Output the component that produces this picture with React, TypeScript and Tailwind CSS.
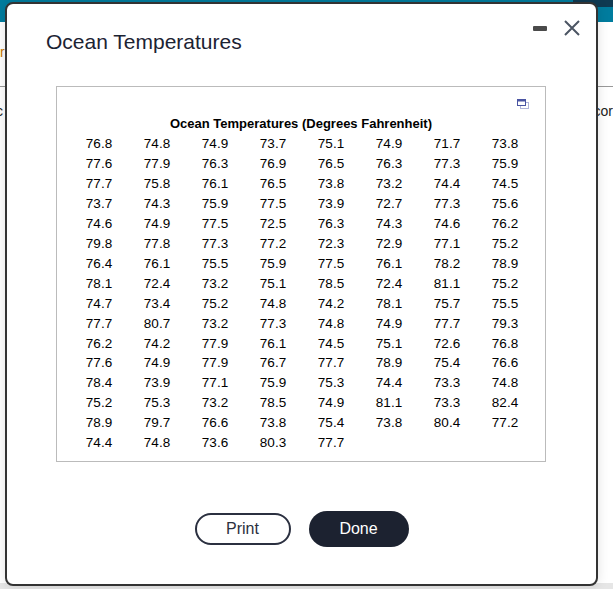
const rows = [
  ['76.8', '74.8', '74.9', '73.7', '75.1', '74.9', '71.7', '73.8'],
  ['77.6', '77.9', '76.3', '76.9', '76.5', '76.3', '77.3', '75.9'],
  ['77.7', '75.8', '76.1', '76.5', '73.8', '73.2', '74.4', '74.5'],
  ['73.7', '74.3', '75.9', '77.5', '73.9', '72.7', '77.3', '75.6'],
  ['74.6', '74.9', '77.5', '72.5', '76.3', '74.3', '74.6', '76.2'],
  ['79.8', '77.8', '77.3', '77.2', '72.3', '72.9', '77.1', '75.2'],
  ['76.4', '76.1', '75.5', '75.9', '77.5', '76.1', '78.2', '78.9'],
  ['78.1', '72.4', '73.2', '75.1', '78.5', '72.4', '81.1', '75.2'],
  ['74.7', '73.4', '75.2', '74.8', '74.2', '78.1', '75.7', '75.5'],
  ['77.7', '80.7', '73.2', '77.3', '74.8', '74.9', '77.7', '79.3'],
  ['76.2', '74.2', '77.9', '76.1', '74.5', '75.1', '72.6', '76.8'],
  ['77.6', '74.9', '77.9', '76.7', '77.7', '78.9', '75.4', '76.6'],
  ['78.4', '73.9', '77.1', '75.9', '75.3', '74.4', '73.3', '74.8'],
  ['75.2', '75.3', '73.2', '78.5', '74.9', '81.1', '73.3', '82.4'],
  ['78.9', '79.7', '76.6', '73.8', '75.4', '73.8', '80.4', '77.2'],
  ['74.4', '74.8', '73.6', '80.3', '77.7'],
];

export default function App() {
  return (
    <div className="relative h-[589px] w-[613px] overflow-hidden bg-white font-['Liberation_Sans',Arial,sans-serif]">
      {/* page behind the dialog */}
      <div className="flex h-[22px] justify-end bg-[#007c9e]">
        <div className="h-[7px] w-[40px] bg-[#0f3a52]" />
      </div>
      <div className="flex h-[65px] items-center border-b border-[#999] pb-1 text-sm text-[#c77700]">r</div>
      <div className="flex justify-between pt-[14px] text-sm text-[#222]">
        <span className="-ml-[4px]">c</span>
        <span>cor</span>
      </div>
      <div className="absolute inset-x-0 bottom-0 h-[6px] bg-[#e6e6e6]" />

      {/* dialog */}
      <div className="absolute left-[5px] top-[2px] flex h-[584px] w-[593px] flex-col rounded-lg border-2 border-[#333] bg-white shadow-[0_0_12px_rgba(0,0,0,0.12)]">
        <div className="flex items-start justify-between pl-[39px] pr-[16px] pt-[24px]">
          <h1 className="text-[21px] leading-[28px] text-[#1c2333]">Ocean Temperatures</h1>
          <div className="-mt-[8px] flex items-center gap-[17px]">
            <div className="h-[5px] w-[14px] rounded-[1px] bg-[#4a4a4a]" />
            <svg width="16" height="16" viewBox="0 0 16 16" fill="none" stroke="#4b5563" strokeWidth="2">
              <path d="M1 1 L15 15 M15 1 L1 15" />
            </svg>
          </div>
        </div>

        <div className="ml-[49px] mt-[30px] h-[376px] w-[490px] border border-[#bbb] pt-[12px]">
          <div className="flex justify-end pr-[16px]">
            <svg width="12" height="10" viewBox="0 0 12 10" fill="none">
              <rect x="3.5" y="3.5" width="8" height="6" stroke="#b0b5d8" />
              <rect x="0.5" y="0.5" width="8" height="6" fill="#fff" stroke="#4a55a2" />
              <path d="M0.5 1.5 H8.5" stroke="#4a55a2" strokeWidth="2" />
            </svg>
          </div>
          <div className="mt-[6px] text-center text-[13px] font-bold leading-[17px] text-black">
            Ocean Temperatures (Degrees Fahrenheit)
          </div>
          <div className="ml-[-1px] mt-[2px] grid grid-cols-[repeat(8,58px)] pl-[14px] text-[13.5px] leading-[19.95px] text-black">
            {rows.flat().map((value, i) => (
              <div key={i} className="text-center">{value}</div>
            ))}
          </div>
        </div>

        <div className="mt-[49px] flex items-center justify-center gap-[18px]">
          <button className="h-[32px] w-[96px] rounded-full border-2 border-[#2b3040] bg-white text-base text-[#2b3040]">Print</button>
          <button className="h-[36px] w-[100px] rounded-full bg-[#1c2230] text-base text-white">Done</button>
        </div>
      </div>
    </div>
  );
}
